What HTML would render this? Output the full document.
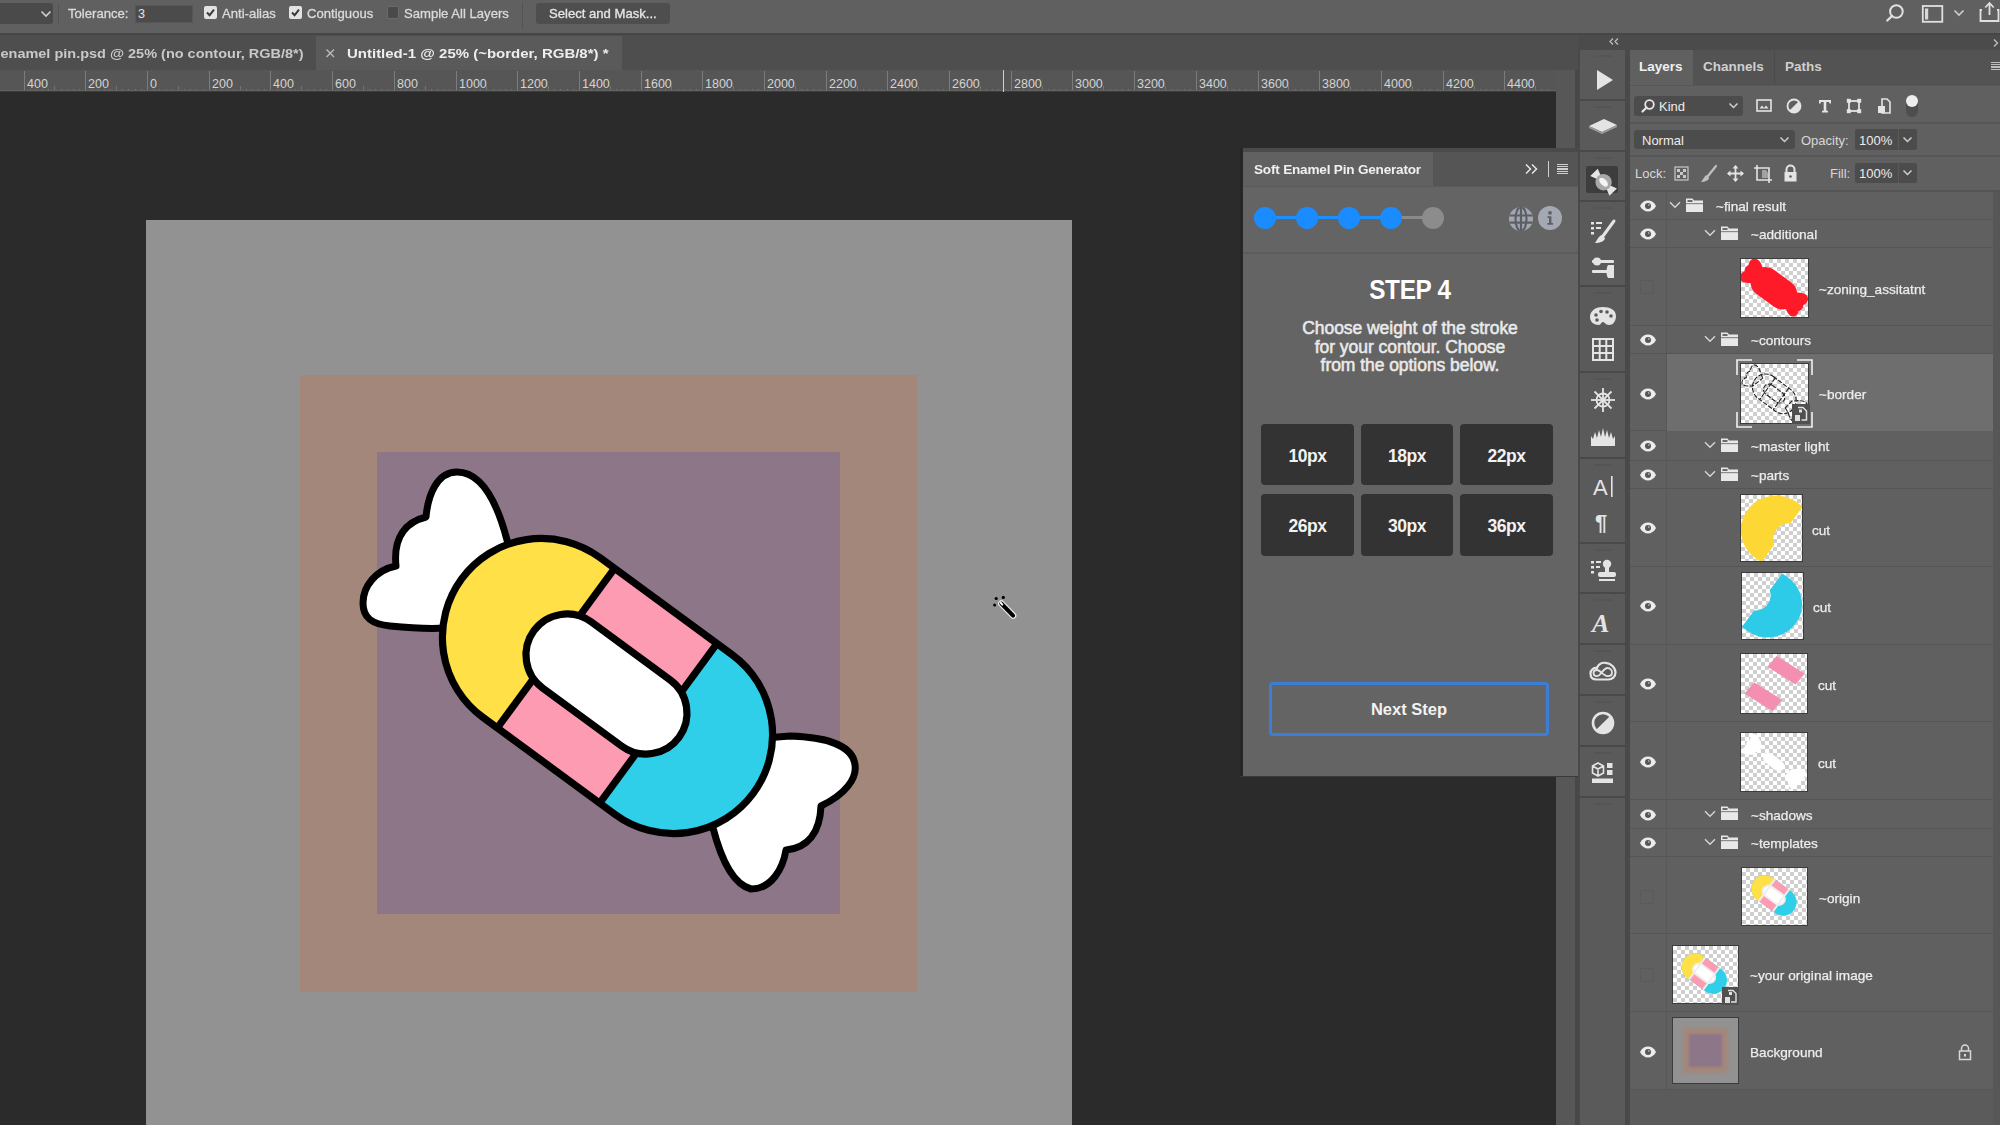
<!DOCTYPE html><html><head><meta charset="utf-8"><style>
*{margin:0;padding:0;box-sizing:border-box}
html,body{width:2000px;height:1125px;overflow:hidden;background:#2b2b2b;font-family:"Liberation Sans",sans-serif;color:#e6e6e6}
.a{position:absolute}
.t{position:absolute;white-space:nowrap;line-height:1}
</style></head><body>
<div class="a" style="left:0px;top:0px;width:2000px;height:33px;background:#606060;"></div>
<div class="a" style="left:0px;top:33px;width:2000px;height:37px;background:#4e4e4e;"></div>
<div class="a" style="left:0px;top:70px;width:1556px;height:22px;background:#565656;"></div>
<div class="a" style="left:146px;top:220px;width:926px;height:905px;background:#929292;"></div>
<div class="a" style="left:1556px;top:70px;width:20px;height:1055px;background:#575757;"></div>
<div class="a" style="left:1575px;top:70px;width:5px;height:1055px;background:#474747;"></div>
<div class="a" style="left:0px;top:3px;width:53px;height:21px;background:#4a4a4a;border-radius:0 3px 3px 0;"></div>
<svg class="a" style="left:40px;top:10px" width="12" height="8"><path d="M1.5 1.5 L6 6 L10.5 1.5" stroke="#cfcfcf" stroke-width="1.6" fill="none"/></svg>
<div class="a" style="left:58px;top:4px;width:1px;height:21px;background:#545454;"></div>
<div class="t" style="left:68px;top:8px;font-size:12.6px;color:#dadada;font-weight:normal;transform:scaleX(1.04);transform-origin:left;-webkit-text-stroke:0.3px currentColor">Tolerance:</div>
<div class="a" style="left:135px;top:5px;width:58px;height:18px;background:#4b4b4b;border:1px solid #565656;"></div>
<div class="t" style="left:138px;top:8px;font-size:12.6px;color:#e6e6e6;font-weight:normal;">3</div>
<div class="a" style="left:204px;top:6px;width:13px;height:13px;background:#e3e3e3;border-radius:2px;"></div>
<svg class="a" style="left:204px;top:6px" width="13" height="13"><path d="M3 6.5 L5.6 9.2 L10 3.6" stroke="#3a3a3a" stroke-width="2" fill="none"/></svg>
<div class="t" style="left:222px;top:8px;font-size:12.6px;color:#dadada;font-weight:normal;transform:scaleX(1.04);transform-origin:left;-webkit-text-stroke:0.3px currentColor">Anti-alias</div>
<div class="a" style="left:289px;top:6px;width:13px;height:13px;background:#e3e3e3;border-radius:2px;"></div>
<svg class="a" style="left:289px;top:6px" width="13" height="13"><path d="M3 6.5 L5.6 9.2 L10 3.6" stroke="#3a3a3a" stroke-width="2" fill="none"/></svg>
<div class="t" style="left:307px;top:8px;font-size:12.6px;color:#dadada;font-weight:normal;transform:scaleX(1.04);transform-origin:left;-webkit-text-stroke:0.3px currentColor">Contiguous</div>
<div class="a" style="left:387px;top:6px;width:12px;height:13px;background:#4a4a4a;border:1px solid #6a6a6a;border-radius:2px;"></div>
<div class="t" style="left:404px;top:8px;font-size:12.6px;color:#dadada;font-weight:normal;transform:scaleX(1.04);transform-origin:left;-webkit-text-stroke:0.3px currentColor">Sample All Layers</div>
<div class="a" style="left:522px;top:2px;width:1px;height:27px;background:#545454;"></div>
<div class="a" style="left:536px;top:3px;width:134px;height:21px;background:#4e4e4e;border-radius:3px;"></div>
<div class="t" style="left:549px;top:8px;font-size:12.6px;color:#e6e6e6;font-weight:normal;transform:scaleX(1.04);transform-origin:left;-webkit-text-stroke:0.3px currentColor">Select and Mask...</div>
<svg class="a" style="left:1880px;top:2px" width="30" height="24"><circle cx="16.4" cy="9.5" r="6.3" stroke="#e0e0e0" stroke-width="2" fill="none"/><path d="M12 14 L7.3 18.5" stroke="#e0e0e0" stroke-width="2.4" stroke-linecap="round"/></svg>
<svg class="a" style="left:1920px;top:3px" width="26" height="22"><rect x="2.8" y="3" width="19.5" height="15.8" stroke="#e0e0e0" stroke-width="1.8" fill="none"/><rect x="5" y="5.5" width="3.2" height="11" fill="#d8d8d8"/></svg>
<svg class="a" style="left:1953px;top:9px" width="12" height="9"><path d="M1.5 1.5 L6 6 L10.5 1.5" stroke="#cfcfcf" stroke-width="1.6" fill="none"/></svg>
<svg class="a" style="left:1976px;top:0px" width="24" height="24"><path d="M6 10 L4.5 10 L4.5 21 L22.5 21 L22.5 10 L21 10" stroke="#e0e0e0" stroke-width="1.8" fill="none"/><path d="M13.5 15 L13.5 3.5 M9.3 7.5 L13.5 3 L17.7 7.5" stroke="#e0e0e0" stroke-width="1.8" fill="none"/></svg>
<div class="a" style="left:0px;top:33px;width:2000px;height:2px;background:#464646;"></div>
<div class="a" style="left:316px;top:36px;width:306px;height:34px;background:#5a5a5a;"></div>
<div class="t" style="right:1697px;top:48px;font-size:12.6px;font-weight:bold;color:#c9c9c9;transform:scaleX(1.15);transform-origin:right">enamel pin.psd @ 25% (no contour, RGB/8*)</div>
<svg class="a" style="left:325px;top:48px" width="11" height="11"><path d="M1.5 1.5 L9 9 M9 1.5 L1.5 9" stroke="#bdbdbd" stroke-width="1.3"/></svg>
<div class="t" style="left:347px;top:48px;font-size:12.6px;color:#eeeeee;font-weight:bold;transform:scaleX(1.19);transform-origin:left">Untitled-1 @ 25% (~border, RGB/8*) *</div>
<div class="a" style="left:300px;top:375px;width:617px;height:617px;background:#a3877a;"></div>
<div class="a" style="left:377px;top:452px;width:463px;height:462px;background:#8e7689;"></div>
<svg class="a" style="left:0;top:0" width="1556" height="1125" viewBox="0 0 1556 1125">
<g stroke="#000" stroke-width="7" stroke-linejoin="round">
<path d="M 520,570 L 507,540 C 497,502 482,472 457,472 C 437,472 428,495 426,517 C 406,522 393,537 396,566 C 376,570 363,586 363,603 C 363,618 372,624 390,626 C 410,628 430,629 446,628 Z" fill="#fff"/>
<path d="M 690,790 L 713,828 C 720,855 732,884 751,889 C 772,889 783,868 786,850 C 808,848 820,832 821,806 C 846,794 857,778 855,765 C 853,745 825,737 790,736 L 740,740 Z" fill="#fff"/>
</g>
<g transform="translate(607.5 686) rotate(36.3)">
 <rect x="-181" y="-99" width="362" height="198" rx="99" fill="#30cfe9"/>
 <path d="M -64,-99 L -82,-99 A 99 99 0 0 0 -82,99 L -64,99 Z" fill="#ffe047"/>
 <rect x="-64" y="-99" width="127" height="198" fill="#fd9bb3"/>
 <g stroke="#000" stroke-width="7.2" fill="none">
  <rect x="-181" y="-99" width="362" height="198" rx="99"/>
  <line x1="-64" y1="-99" x2="-64" y2="99"/>
  <line x1="63" y1="-99" x2="63" y2="99"/>
 </g>
 <rect x="-92" y="-42" width="180" height="82" rx="41" fill="#fff" stroke="#000" stroke-width="7.2"/>
</g>
</svg>
<div class="a" style="left:1240px;top:148px;width:3px;height:629px;background:#262626;"></div>
<div class="a" style="left:1243px;top:148px;width:335px;height:4px;background:#4a4a4a;"></div>
<div class="a" style="left:1243px;top:152px;width:335px;height:624px;background:#646464;"></div>
<div class="a" style="left:1243px;top:152px;width:190px;height:34px;background:#616161;"></div>
<div class="a" style="left:1433px;top:152px;width:145px;height:34px;background:#555555;"></div>
<div class="a" style="left:1240px;top:776px;width:338px;height:1px;background:#3a3a3a;"></div>
<div class="a" style="left:1243px;top:186px;width:335px;height:1px;background:#5a5a5a;"></div>
<div class="t" style="left:1254px;top:163px;font-size:13.2px;color:#f0f0f0;font-weight:bold;letter-spacing:-0.2px;transform:scaleX(1.03);transform-origin:left">Soft Enamel Pin Generator</div>
<svg class="a" style="left:1524px;top:162px" width="16" height="14"><path d="M2 2.5 L6.5 7 L2 11.5 M8 2.5 L12.5 7 L8 11.5" stroke="#e6e6e6" stroke-width="1.5" fill="none"/></svg>
<div class="a" style="left:1548px;top:161px;width:1px;height:16px;background:#d0d0d0;"></div>
<div class="a" style="left:1557px;top:164.0px;width:11px;height:1.2px;background:#cfcfcf;"></div>
<div class="a" style="left:1557px;top:166.2px;width:11px;height:1.2px;background:#cfcfcf;"></div>
<div class="a" style="left:1557px;top:168.4px;width:11px;height:1.2px;background:#cfcfcf;"></div>
<div class="a" style="left:1557px;top:170.6px;width:11px;height:1.2px;background:#cfcfcf;"></div>
<div class="a" style="left:1557px;top:172.8px;width:11px;height:1.2px;background:#cfcfcf;"></div>
<div class="a" style="left:1265px;top:216px;width:126px;height:3px;background:#1e8fff;"></div>
<div class="a" style="left:1391px;top:216px;width:42px;height:3px;background:#8a8a8a;"></div>
<div class="a" style="left:1254px;top:206.5px;width:22px;height:22px;border-radius:50%;background:#1a8cff"></div>
<div class="a" style="left:1296px;top:206.5px;width:22px;height:22px;border-radius:50%;background:#1a8cff"></div>
<div class="a" style="left:1337.5px;top:206.5px;width:22px;height:22px;border-radius:50%;background:#1a8cff"></div>
<div class="a" style="left:1379.5px;top:206.5px;width:22px;height:22px;border-radius:50%;background:#1a8cff"></div>
<div class="a" style="left:1422px;top:206.5px;width:22px;height:22px;border-radius:50%;background:#8c8c8c"></div>
<svg class="a" style="left:1507.6px;top:205.6px" width="26" height="26"><defs><clipPath id="gc"><circle cx="13" cy="13" r="12"/></clipPath></defs><circle cx="13" cy="13" r="12" fill="#a2a6af"/><g fill="none" stroke="#5d5f66" stroke-width="2.2" clip-path="url(#gc)"><ellipse cx="13" cy="13" rx="5.5" ry="12.2"/><line x1="13" y1="0" x2="13" y2="26"/><line x1="0" y1="9.5" x2="26" y2="9.5"/><line x1="0" y1="16.6" x2="26" y2="16.6"/></g></svg>
<div class="a" style="left:1537.5px;top:205.5px;width:24px;height:24px;border-radius:50%;background:#a4a8b2"></div>
<svg class="a" style="left:1537.5px;top:205.5px" width="24" height="24"><circle cx="12" cy="6.8" r="1.9" fill="#5e6066"/><path d="M9.5 10.2 L13.4 10.2 L13.4 17 L15 17 L15 18.8 L9.3 18.8 L9.3 17 L11 17 L11 12 L9.5 12 Z" fill="#5e6066"/></svg>
<div class="a" style="left:1243px;top:252px;width:335px;height:2px;background:#5c5c5c;"></div>
<div class="t" style="left:1410px;top:277px;font-size:27px;color:#ffffff;font-weight:bold;transform:translateX(-50%) scaleX(0.9);letter-spacing:-0.3px">STEP 4</div>
<div class="a" style="left:1260px;top:319px;width:300px;text-align:center;font-size:17.5px;line-height:18.6px;color:#eaeaea;font-weight:normal;-webkit-text-stroke:0.55px #eaeaea;letter-spacing:-0.05px">Choose weight of the stroke<br>for your contour. Choose<br>from the options below.</div>
<div class="a" style="left:1261px;top:424px;width:93px;height:61px;background:#333333;border-radius:4px;font-size:17.5px;font-weight:bold;color:#f2f2f2;text-align:center;line-height:64px;letter-spacing:-0.5px">10px</div>
<div class="a" style="left:1361px;top:424px;width:92px;height:61px;background:#333333;border-radius:4px;font-size:17.5px;font-weight:bold;color:#f2f2f2;text-align:center;line-height:64px;letter-spacing:-0.5px">18px</div>
<div class="a" style="left:1460px;top:424px;width:93px;height:61px;background:#333333;border-radius:4px;font-size:17.5px;font-weight:bold;color:#f2f2f2;text-align:center;line-height:64px;letter-spacing:-0.5px">22px</div>
<div class="a" style="left:1261px;top:494px;width:93px;height:62px;background:#333333;border-radius:4px;font-size:17.5px;font-weight:bold;color:#f2f2f2;text-align:center;line-height:65px;letter-spacing:-0.5px">26px</div>
<div class="a" style="left:1361px;top:494px;width:92px;height:62px;background:#333333;border-radius:4px;font-size:17.5px;font-weight:bold;color:#f2f2f2;text-align:center;line-height:65px;letter-spacing:-0.5px">30px</div>
<div class="a" style="left:1460px;top:494px;width:93px;height:62px;background:#333333;border-radius:4px;font-size:17.5px;font-weight:bold;color:#f2f2f2;text-align:center;line-height:65px;letter-spacing:-0.5px">36px</div>
<div class="a" style="left:1269px;top:682px;width:280px;height:54px;border:3px solid #3b7ed8;border-radius:4px;font-size:16.5px;font-weight:bold;color:#f2f2f2;text-align:center;line-height:48px">Next Step</div>
<div class="a" style="left:1578px;top:35px;width:422px;height:15px;background:#4b4b4b;"></div>
<svg class="a" style="left:1607px;top:37px" width="14" height="10"><path d="M6 1.5 L3 4.5 L6 7.5 M11 1.5 L8 4.5 L11 7.5" stroke="#bdbdbd" stroke-width="1.3" fill="none"/></svg>
<svg class="a" style="left:1992px;top:38px" width="8" height="10"><path d="M2 1.5 L5.5 5 L2 8.5" stroke="#bdbdbd" stroke-width="1.4" fill="none"/></svg>
<div class="a" style="left:1578px;top:50px;width:50px;height:1075px;background:#494949;"></div>
<div class="a" style="left:1580px;top:50px;width:45px;height:49px;background:#5a5a5a;"></div>
<div class="a" style="left:1594px;top:55px;width:18px;height:2px;background:#555555;"></div>
<div class="a" style="left:1580px;top:101px;width:45px;height:49px;background:#5a5a5a;"></div>
<div class="a" style="left:1594px;top:106px;width:18px;height:2px;background:#555555;"></div>
<div class="a" style="left:1580px;top:152px;width:45px;height:48px;background:#5a5a5a;"></div>
<div class="a" style="left:1594px;top:157px;width:18px;height:2px;background:#555555;"></div>
<div class="a" style="left:1580px;top:202px;width:45px;height:83px;background:#5a5a5a;"></div>
<div class="a" style="left:1594px;top:207px;width:18px;height:2px;background:#555555;"></div>
<div class="a" style="left:1580px;top:287px;width:45px;height:84px;background:#5a5a5a;"></div>
<div class="a" style="left:1594px;top:292px;width:18px;height:2px;background:#555555;"></div>
<div class="a" style="left:1580px;top:373px;width:45px;height:84px;background:#5a5a5a;"></div>
<div class="a" style="left:1594px;top:378px;width:18px;height:2px;background:#555555;"></div>
<div class="a" style="left:1580px;top:459px;width:45px;height:83px;background:#5a5a5a;"></div>
<div class="a" style="left:1594px;top:464px;width:18px;height:2px;background:#555555;"></div>
<div class="a" style="left:1580px;top:544px;width:45px;height:48px;background:#5a5a5a;"></div>
<div class="a" style="left:1594px;top:549px;width:18px;height:2px;background:#555555;"></div>
<div class="a" style="left:1580px;top:594px;width:45px;height:49px;background:#5a5a5a;"></div>
<div class="a" style="left:1594px;top:599px;width:18px;height:2px;background:#555555;"></div>
<div class="a" style="left:1580px;top:645px;width:45px;height:49px;background:#5a5a5a;"></div>
<div class="a" style="left:1594px;top:650px;width:18px;height:2px;background:#555555;"></div>
<div class="a" style="left:1580px;top:696px;width:45px;height:49px;background:#5a5a5a;"></div>
<div class="a" style="left:1594px;top:701px;width:18px;height:2px;background:#555555;"></div>
<div class="a" style="left:1580px;top:747px;width:45px;height:49px;background:#5a5a5a;"></div>
<div class="a" style="left:1594px;top:752px;width:18px;height:2px;background:#555555;"></div>
<div class="a" style="left:1580px;top:798px;width:45px;height:327px;background:#5a5a5a;"></div>
<div class="a" style="left:1594px;top:803px;width:18px;height:2px;background:#555555;"></div>
<svg class="a" style="left:1589.0px;top:65.0px" width="30" height="30" viewBox="0 0 30 30"><path d="M8 5 L24 15 L8 25 Z" fill="#e4e4e4"/></svg>
<svg class="a" style="left:1587.0px;top:112.0px" width="32" height="28" viewBox="0 0 32 28"><path d="M2 14 L17 7 L30 13 L15 20 Z" fill="#e4e4e4"/><path d="M2 14 L15 20 L30 13 L30 15 L15 22 L2 16 Z" fill="#9a9a9a"/></svg>
<div class="a" style="left:1586px;top:166px;width:32px;height:27px;background:#3d3d3d;border-radius:2px;"></div>
<svg class="a" style="left:1586px;top:166px;overflow:visible" width="32" height="27"><g transform="translate(17.6 16.2) rotate(46)"><path d="M-7 -2.6 L-13.8 -5.2 L-13.8 5.2 L-7 2.6 Z" fill="#e4e4e4"/><path d="M7 -2.6 L13.8 -5.2 L13.8 5.2 L7 2.6 Z" fill="#e4e4e4"/><circle r="8.2" fill="#a8a8a8"/><ellipse rx="5.4" ry="3.1" fill="#f4f4f4"/></g></svg>
<svg class="a" style="left:1588.0px;top:217.0px" width="30" height="30" viewBox="0 0 30 30"><g fill="#e4e4e4"><rect x="3" y="5" width="3" height="2.5"/><rect x="3" y="10" width="3" height="2.5"/><rect x="3" y="15" width="3" height="2.5"/><rect x="8" y="5" width="6" height="2"/><rect x="8" y="10" width="5" height="2"/></g><path d="M26 4 L15 19" stroke="#e4e4e4" stroke-width="3" stroke-linecap="round"/><path d="M14 18 C10 19 9 24 7 26 C12 26 17 24 17 21 Z" fill="#e4e4e4"/></svg>
<svg class="a" style="left:1588.0px;top:251.0px" width="30" height="30" viewBox="0 0 30 30"><g fill="#e4e4e4"><rect x="4" y="9" width="22" height="3" rx="1"/><circle cx="9" cy="10.5" r="4"/><rect x="4" y="19" width="22" height="3" rx="1"/><path d="M20 14 L26 14 L26 27 L20 27 C18 24 18 17 20 14Z"/></g></svg>
<svg class="a" style="left:1588.0px;top:301.0px" width="30" height="30" viewBox="0 0 30 30"><path d="M15 6 C6 6 2 11 2 16 C2 21 6 24 11 24 C13 24 13 21 15 21 C17 21 17 24 21 24 C26 24 28 19 28 15 C28 9 22 6 15 6 Z" fill="#e4e4e4"/><g fill="#5a5a5a"><circle cx="8" cy="14" r="1.8"/><circle cx="13" cy="10.5" r="1.8"/><circle cx="19" cy="11" r="1.8"/><circle cx="23" cy="15" r="1.8"/><circle cx="9" cy="19" r="1.8"/></g></svg>
<svg class="a" style="left:1588.0px;top:335.0px" width="30" height="30" viewBox="0 0 30 30"><g stroke="#e4e4e4" stroke-width="2" fill="none"><rect x="5" y="4" width="20" height="21"/><line x1="11.7" y1="4" x2="11.7" y2="25"/><line x1="18.3" y1="4" x2="18.3" y2="25"/><line x1="5" y1="11" x2="25" y2="11"/><line x1="5" y1="18" x2="25" y2="18"/></g></svg>
<svg class="a" style="left:1588.0px;top:385.0px" width="30" height="30" viewBox="0 0 30 30"><g stroke="#e4e4e4" stroke-width="1.8" fill="none"><circle cx="15" cy="15" r="6.5"/><line x1="15" y1="3" x2="15" y2="27"/><line x1="3" y1="15" x2="27" y2="15"/><line x1="6.5" y1="6.5" x2="23.5" y2="23.5"/><line x1="23.5" y1="6.5" x2="6.5" y2="23.5"/></g></svg>
<svg class="a" style="left:1588.0px;top:422.0px" width="30" height="30" viewBox="0 0 30 30"><path d="M3 24 L3 14 L5 17 L7 10 L9 16 L11 8 L13 15 L15 6 L17 15 L19 8 L21 16 L23 10 L25 17 L27 14 L27 24 Z" fill="#e4e4e4"/></svg>
<svg class="a" style="left:1589.0px;top:471.0px" width="30" height="30" viewBox="0 0 30 30"><text x="4" y="24" font-family="Liberation Sans" font-size="22" fill="#e4e4e4">A</text><rect x="22" y="5" width="1.6" height="21" fill="#e4e4e4"/></svg>
<svg class="a" style="left:1588.0px;top:505.0px" width="30" height="30" viewBox="0 0 30 30"><text x="7" y="25" font-family="Liberation Sans" font-weight="bold" font-size="22" fill="#e4e4e4">¶</text></svg>
<svg class="a" style="left:1588.0px;top:556.0px" width="30" height="30" viewBox="0 0 30 30"><g fill="#e4e4e4"><rect x="3" y="5" width="3" height="2.5"/><rect x="3" y="10" width="3" height="2.5"/><rect x="3" y="15" width="3" height="2.5"/><rect x="8" y="5" width="5" height="2"/><rect x="8" y="10" width="4" height="2"/><circle cx="19" cy="8" r="4.2"/><rect x="17" y="11" width="4" height="6"/><rect x="10" y="16" width="18" height="5" rx="2"/><rect x="11" y="23" width="16" height="2"/></g></svg>
<svg class="a" style="left:1588.0px;top:607.0px" width="30" height="30" viewBox="0 0 30 30"><text x="4" y="25" font-family="Liberation Serif" font-style="italic" font-weight="bold" font-size="26" fill="#e4e4e4">A</text></svg>
<svg class="a" style="left:1588.0px;top:658.0px" width="30" height="30" viewBox="0 0 30 30"><g stroke="#e4e4e4" stroke-width="2.2" fill="none"><path d="M8.5 21.5 C4 21.5 2.5 18.5 2.5 15.5 C2.5 11.5 6 9.5 9 10 C10.5 6 14 4.5 17.5 4.8 C23 5.2 27.5 9.5 27.5 14.5 C27.5 19 24 21.5 20.5 21.5 Z"/><path d="M9 18.2 C6.5 18.2 5.5 16.5 5.5 15 C5.5 13.2 7 12 9 12 C12.5 12 15.5 18.2 20 18.2 C22.5 18.2 24 16.5 24 14.5 C24 12 22 10 19.5 10 C15 10 13 18.2 9 18.2 Z" stroke-width="1.8"/></g></svg>
<svg class="a" style="left:1588.0px;top:708.0px" width="30" height="30" viewBox="0 0 30 30"><circle cx="15" cy="15" r="10" fill="none" stroke="#e4e4e4" stroke-width="2.6"/><path d="M22.1 7.9 A10 10 0 0 1 7.9 22.1 Z" fill="#e4e4e4"/></svg>
<svg class="a" style="left:1588.0px;top:758.0px" width="30" height="30" viewBox="0 0 30 30"><g stroke="#e4e4e4" stroke-width="1.6" fill="none"><path d="M4.5 8 L10 5 L15.5 8 L15.5 15 L10 18 L4.5 15 Z M4.5 8 L10 11 L15.5 8 M10 11 L10 18"/></g><g fill="#e4e4e4"><rect x="19" y="5" width="5.5" height="5"/><rect x="19" y="12" width="5.5" height="5"/><rect x="4" y="20.5" width="21" height="4.5"/></g></svg>
<div class="a" style="left:1628px;top:50px;width:372px;height:1075px;background:#606060;"></div>
<div class="a" style="left:1628px;top:50px;width:2px;height:1075px;background:#4a4a4a;"></div>
<div class="a" style="left:1630px;top:50px;width:370px;height:35px;background:#535353;"></div>
<div class="a" style="left:1630px;top:50px;width:63px;height:35px;background:#606060;"></div>
<div class="a" style="left:1774px;top:50px;width:1px;height:35px;background:#4b4b4b;"></div>
<div class="t" style="left:1639px;top:60px;font-size:13.5px;color:#f0f0f0;font-weight:bold;">Layers</div>
<div class="t" style="left:1703px;top:60px;font-size:13.5px;color:#cfcfcf;font-weight:bold;">Channels</div>
<div class="t" style="left:1785px;top:60px;font-size:13.5px;color:#cfcfcf;font-weight:bold;">Paths</div>
<div class="a" style="left:1991px;top:62.0px;width:9px;height:1.2px;background:#bdbdbd;"></div>
<div class="a" style="left:1991px;top:64.2px;width:9px;height:1.2px;background:#bdbdbd;"></div>
<div class="a" style="left:1991px;top:66.4px;width:9px;height:1.2px;background:#bdbdbd;"></div>
<div class="a" style="left:1991px;top:68.6px;width:9px;height:1.2px;background:#bdbdbd;"></div>
<div class="a" style="left:1630px;top:85px;width:370px;height:1px;background:#575757;"></div>
<div class="a" style="left:1634px;top:96px;width:109px;height:20px;background:#4c4c4c;border-radius:3px;"></div>
<svg class="a" style="left:1640px;top:98px" width="16" height="16"><circle cx="9.5" cy="6.5" r="4.3" stroke="#e6e6e6" stroke-width="1.8" fill="none"/><path d="M6.6 9.5 L2.5 13.5" stroke="#e6e6e6" stroke-width="2.2" stroke-linecap="round"/></svg>
<div class="t" style="left:1659px;top:100px;font-size:13px;color:#ececec;font-weight:normal;">Kind</div>
<svg class="a" style="left:1728px;top:102px" width="11" height="8"><path d="M1.5 1.5 L5.5 5.5 L9.5 1.5" stroke="#cfcfcf" stroke-width="1.5" fill="none"/></svg>
<svg class="a" style="left:1755px;top:97px" width="18" height="17"><rect x="2" y="3" width="14" height="11" stroke="#e4e4e4" stroke-width="1.6" fill="none"/><path d="M4.5 11.5 L7 8.5 L9 11 L11 8.5 L13.5 11.5 Z" fill="#e4e4e4"/></svg>
<svg class="a" style="left:1785px;top:97px" width="18" height="18"><circle cx="9" cy="9" r="6.5" stroke="#e4e4e4" stroke-width="1.8" fill="none"/><path d="M13.6 4.4 A6.5 6.5 0 0 1 4.4 13.6 Z" fill="#e4e4e4"/></svg>
<svg class="a" style="left:1816px;top:97px" width="18" height="18"><path d="M3 3 L15 3 L15 6.5 L13.5 6.5 L13 5 L10.3 5 L10.3 13.5 L12 14 L12 15.5 L6 15.5 L6 14 L7.7 13.5 L7.7 5 L5 5 L4.5 6.5 L3 6.5 Z" fill="#e4e4e4"/></svg>
<svg class="a" style="left:1845px;top:97px" width="18" height="18"><rect x="4" y="4" width="10" height="10" stroke="#e4e4e4" stroke-width="1.8" fill="none"/><g fill="#e4e4e4"><rect x="1.8" y="1.8" width="4" height="4"/><rect x="12.2" y="1.8" width="4" height="4"/><rect x="1.8" y="12.2" width="4" height="4"/><rect x="12.2" y="12.2" width="4" height="4"/></g></svg>
<svg class="a" style="left:1875px;top:97px" width="18" height="18"><path d="M7 2 L12 2 L15 5 L15 16 L7 16 Z" stroke="#e4e4e4" stroke-width="1.6" fill="none"/><rect x="3" y="9" width="7" height="7" fill="#e4e4e4"/></svg>
<div class="a" style="left:1906px;top:97px;width:12px;height:20px;border-radius:6px;background:#4e4e4e"></div>
<div class="a" style="left:1906px;top:95px;width:12px;height:12px;border-radius:50%;background:#eeeeee"></div>
<div class="a" style="left:1630px;top:122px;width:370px;height:2px;background:#565656;"></div>
<div class="a" style="left:1634px;top:130px;width:161px;height:19px;background:#4c4c4c;border-radius:3px;"></div>
<div class="t" style="left:1642px;top:134px;font-size:13px;color:#ececec;font-weight:normal;">Normal</div>
<svg class="a" style="left:1779px;top:136px" width="11" height="8"><path d="M1.5 1.5 L5.5 5.5 L9.5 1.5" stroke="#cfcfcf" stroke-width="1.5" fill="none"/></svg>
<div class="t" style="left:1801px;top:134px;font-size:13px;color:#d8d8d8;font-weight:normal;">Opacity:</div>
<div class="a" style="left:1855px;top:129px;width:62px;height:21px;background:#4c4c4c;border-radius:2px;"></div>
<div class="a" style="left:1898px;top:129px;width:1px;height:21px;background:#5a5a5a;"></div>
<div class="t" style="left:1859px;top:134px;font-size:13px;color:#ececec;font-weight:normal;">100%</div>
<svg class="a" style="left:1902px;top:136px" width="11" height="8"><path d="M1.5 1.5 L5.5 5.5 L9.5 1.5" stroke="#cfcfcf" stroke-width="1.5" fill="none"/></svg>
<div class="a" style="left:1630px;top:155px;width:370px;height:2px;background:#565656;"></div>
<div class="t" style="left:1635px;top:167px;font-size:13px;color:#d8d8d8;font-weight:normal;">Lock:</div>
<svg class="a" style="left:1674px;top:166px" width="15" height="15"><rect x="1" y="1" width="13" height="13" stroke="#c8c8c8" stroke-width="1.2" fill="none"/><g fill="#c8c8c8"><rect x="3" y="3" width="3" height="3"/><rect x="9" y="3" width="3" height="3"/><rect x="6" y="6" width="3" height="3"/><rect x="3" y="9" width="3" height="3"/><rect x="9" y="9" width="3" height="3"/></g></svg>
<svg class="a" style="left:1699px;top:164px" width="20" height="20"><path d="M17 2 L9 12" stroke="#bfbfbf" stroke-width="2.2" stroke-linecap="round"/><path d="M8 11 C5 12 4 16 2 18 C6 18 10 16 10 14 Z" fill="#bfbfbf"/></svg>
<svg class="a" style="left:1726px;top:164px" width="19" height="19"><path d="M9.5 2 L9.5 17 M2 9.5 L17 9.5" stroke="#e4e4e4" stroke-width="1.8"/><path d="M9.5 1 L12.5 4.5 L6.5 4.5 Z M9.5 18 L12.5 14.5 L6.5 14.5 Z M1 9.5 L4.5 6.5 L4.5 12.5 Z M18 9.5 L14.5 6.5 L14.5 12.5 Z" fill="#e4e4e4"/></svg>
<svg class="a" style="left:1753px;top:164px" width="20" height="20"><path d="M4 1 L4 16 L19 16 M1 4 L16 4 L16 19" stroke="#e4e4e4" stroke-width="1.6" fill="none"/><path d="M9 6 L13 6 L15 9 L15 14 L9 14" fill="#cfcfcf" opacity="0.6"/></svg>
<svg class="a" style="left:1782px;top:164px" width="17" height="19"><path d="M4.5 8 L4.5 5.5 A4 4 0 0 1 12.5 5.5 L12.5 8" stroke="#e4e4e4" stroke-width="2" fill="none"/><rect x="2.5" y="8" width="12" height="9.5" fill="#e4e4e4"/><circle cx="8.5" cy="12.5" r="1.3" fill="#606060"/></svg>
<div class="t" style="left:1830px;top:167px;font-size:13px;color:#d8d8d8;font-weight:normal;">Fill:</div>
<div class="a" style="left:1855px;top:163px;width:62px;height:20px;background:#4c4c4c;border-radius:2px;"></div>
<div class="a" style="left:1898px;top:163px;width:1px;height:20px;background:#5a5a5a;"></div>
<div class="t" style="left:1859px;top:167px;font-size:13px;color:#ececec;font-weight:normal;">100%</div>
<svg class="a" style="left:1902px;top:169px" width="11" height="8"><path d="M1.5 1.5 L5.5 5.5 L9.5 1.5" stroke="#cfcfcf" stroke-width="1.5" fill="none"/></svg>
<div class="a" style="left:1630px;top:190px;width:370px;height:2px;background:#545454;"></div>
<div class="a" style="left:1666px;top:192px;width:1px;height:897px;background:#585858;"></div>
<div class="a" style="left:1630px;top:191px;width:363px;height:1px;background:#555555;"></div>
<div class="a" style="left:1630px;top:219px;width:363px;height:1px;background:#555555;"></div>
<div class="a" style="left:1630px;top:247px;width:363px;height:1px;background:#555555;"></div>
<div class="a" style="left:1630px;top:325px;width:363px;height:1px;background:#555555;"></div>
<div class="a" style="left:1630px;top:353px;width:363px;height:1px;background:#555555;"></div>
<div class="a" style="left:1630px;top:430px;width:363px;height:1px;background:#555555;"></div>
<div class="a" style="left:1630px;top:460px;width:363px;height:1px;background:#555555;"></div>
<div class="a" style="left:1630px;top:488px;width:363px;height:1px;background:#555555;"></div>
<div class="a" style="left:1630px;top:566px;width:363px;height:1px;background:#555555;"></div>
<div class="a" style="left:1630px;top:644px;width:363px;height:1px;background:#555555;"></div>
<div class="a" style="left:1630px;top:721px;width:363px;height:1px;background:#555555;"></div>
<div class="a" style="left:1630px;top:799px;width:363px;height:1px;background:#555555;"></div>
<div class="a" style="left:1630px;top:828px;width:363px;height:1px;background:#555555;"></div>
<div class="a" style="left:1630px;top:856px;width:363px;height:1px;background:#555555;"></div>
<div class="a" style="left:1630px;top:933px;width:363px;height:1px;background:#555555;"></div>
<div class="a" style="left:1630px;top:1011px;width:363px;height:1px;background:#555555;"></div>
<div class="a" style="left:1630px;top:1089px;width:363px;height:1px;background:#555555;"></div>
<div class="a" style="left:1667px;top:354px;width:326px;height:77px;background:#6e6e6e;"></div>
<svg class="a" style="left:1639px;top:199.0px" width="18" height="14"><path d="M1 7 C4.5 -0.3 13.5 -0.3 17 7 C13.5 14.3 4.5 14.3 1 7 Z" fill="#ececec"/><circle cx="9" cy="7" r="3" fill="#575757"/><circle cx="9.8" cy="6" r="0.8" fill="#cfcfcf"/></svg>
<svg class="a" style="left:1669px;top:201.0px" width="12" height="8"><path d="M1 1.2 L6 6.2 L11 1.2" stroke="#d6d6d6" stroke-width="1.4" fill="none"/></svg>
<svg class="a" style="left:1685px;top:196.5px" width="19" height="16"><path d="M1 1.5 L7.5 1.5 L9 3.5 L18 3.5 L18 15 L1 15 Z" fill="#e8e8e8"/><rect x="2.5" y="3" width="5" height="2" fill="#6a6a6a"/><rect x="1" y="6" width="17" height="1.2" fill="#8a8a8a"/></svg>
<div class="t" style="left:1716px;top:201.0px;font-size:12.6px;color:#ececec;-webkit-text-stroke:0.25px #ececec;transform:scaleX(1.08);transform-origin:left">~final result</div>
<svg class="a" style="left:1639px;top:227.0px" width="18" height="14"><path d="M1 7 C4.5 -0.3 13.5 -0.3 17 7 C13.5 14.3 4.5 14.3 1 7 Z" fill="#ececec"/><circle cx="9" cy="7" r="3" fill="#575757"/><circle cx="9.8" cy="6" r="0.8" fill="#cfcfcf"/></svg>
<svg class="a" style="left:1704px;top:229.0px" width="12" height="8"><path d="M1 1.2 L6 6.2 L11 1.2" stroke="#d6d6d6" stroke-width="1.4" fill="none"/></svg>
<svg class="a" style="left:1720px;top:224.5px" width="19" height="16"><path d="M1 1.5 L7.5 1.5 L9 3.5 L18 3.5 L18 15 L1 15 Z" fill="#e8e8e8"/><rect x="2.5" y="3" width="5" height="2" fill="#6a6a6a"/><rect x="1" y="6" width="17" height="1.2" fill="#8a8a8a"/></svg>
<div class="t" style="left:1751px;top:229.0px;font-size:12.6px;color:#ececec;-webkit-text-stroke:0.25px #ececec;transform:scaleX(1.08);transform-origin:left">~additional</div>
<svg class="a" style="left:1639px;top:333.0px" width="18" height="14"><path d="M1 7 C4.5 -0.3 13.5 -0.3 17 7 C13.5 14.3 4.5 14.3 1 7 Z" fill="#ececec"/><circle cx="9" cy="7" r="3" fill="#575757"/><circle cx="9.8" cy="6" r="0.8" fill="#cfcfcf"/></svg>
<svg class="a" style="left:1704px;top:335.0px" width="12" height="8"><path d="M1 1.2 L6 6.2 L11 1.2" stroke="#d6d6d6" stroke-width="1.4" fill="none"/></svg>
<svg class="a" style="left:1720px;top:330.5px" width="19" height="16"><path d="M1 1.5 L7.5 1.5 L9 3.5 L18 3.5 L18 15 L1 15 Z" fill="#e8e8e8"/><rect x="2.5" y="3" width="5" height="2" fill="#6a6a6a"/><rect x="1" y="6" width="17" height="1.2" fill="#8a8a8a"/></svg>
<div class="t" style="left:1751px;top:335.0px;font-size:12.6px;color:#ececec;-webkit-text-stroke:0.25px #ececec;transform:scaleX(1.08);transform-origin:left">~contours</div>
<svg class="a" style="left:1639px;top:439.0px" width="18" height="14"><path d="M1 7 C4.5 -0.3 13.5 -0.3 17 7 C13.5 14.3 4.5 14.3 1 7 Z" fill="#ececec"/><circle cx="9" cy="7" r="3" fill="#575757"/><circle cx="9.8" cy="6" r="0.8" fill="#cfcfcf"/></svg>
<svg class="a" style="left:1704px;top:441.0px" width="12" height="8"><path d="M1 1.2 L6 6.2 L11 1.2" stroke="#d6d6d6" stroke-width="1.4" fill="none"/></svg>
<svg class="a" style="left:1720px;top:436.5px" width="19" height="16"><path d="M1 1.5 L7.5 1.5 L9 3.5 L18 3.5 L18 15 L1 15 Z" fill="#e8e8e8"/><rect x="2.5" y="3" width="5" height="2" fill="#6a6a6a"/><rect x="1" y="6" width="17" height="1.2" fill="#8a8a8a"/></svg>
<div class="t" style="left:1751px;top:441.0px;font-size:12.6px;color:#ececec;-webkit-text-stroke:0.25px #ececec;transform:scaleX(1.08);transform-origin:left">~master light</div>
<svg class="a" style="left:1639px;top:468.0px" width="18" height="14"><path d="M1 7 C4.5 -0.3 13.5 -0.3 17 7 C13.5 14.3 4.5 14.3 1 7 Z" fill="#ececec"/><circle cx="9" cy="7" r="3" fill="#575757"/><circle cx="9.8" cy="6" r="0.8" fill="#cfcfcf"/></svg>
<svg class="a" style="left:1704px;top:470.0px" width="12" height="8"><path d="M1 1.2 L6 6.2 L11 1.2" stroke="#d6d6d6" stroke-width="1.4" fill="none"/></svg>
<svg class="a" style="left:1720px;top:465.5px" width="19" height="16"><path d="M1 1.5 L7.5 1.5 L9 3.5 L18 3.5 L18 15 L1 15 Z" fill="#e8e8e8"/><rect x="2.5" y="3" width="5" height="2" fill="#6a6a6a"/><rect x="1" y="6" width="17" height="1.2" fill="#8a8a8a"/></svg>
<div class="t" style="left:1751px;top:470.0px;font-size:12.6px;color:#ececec;-webkit-text-stroke:0.25px #ececec;transform:scaleX(1.08);transform-origin:left">~parts</div>
<svg class="a" style="left:1639px;top:807.5px" width="18" height="14"><path d="M1 7 C4.5 -0.3 13.5 -0.3 17 7 C13.5 14.3 4.5 14.3 1 7 Z" fill="#ececec"/><circle cx="9" cy="7" r="3" fill="#575757"/><circle cx="9.8" cy="6" r="0.8" fill="#cfcfcf"/></svg>
<svg class="a" style="left:1704px;top:809.5px" width="12" height="8"><path d="M1 1.2 L6 6.2 L11 1.2" stroke="#d6d6d6" stroke-width="1.4" fill="none"/></svg>
<svg class="a" style="left:1720px;top:805.0px" width="19" height="16"><path d="M1 1.5 L7.5 1.5 L9 3.5 L18 3.5 L18 15 L1 15 Z" fill="#e8e8e8"/><rect x="2.5" y="3" width="5" height="2" fill="#6a6a6a"/><rect x="1" y="6" width="17" height="1.2" fill="#8a8a8a"/></svg>
<div class="t" style="left:1751px;top:809.5px;font-size:12.6px;color:#ececec;-webkit-text-stroke:0.25px #ececec;transform:scaleX(1.08);transform-origin:left">~shadows</div>
<svg class="a" style="left:1639px;top:836.0px" width="18" height="14"><path d="M1 7 C4.5 -0.3 13.5 -0.3 17 7 C13.5 14.3 4.5 14.3 1 7 Z" fill="#ececec"/><circle cx="9" cy="7" r="3" fill="#575757"/><circle cx="9.8" cy="6" r="0.8" fill="#cfcfcf"/></svg>
<svg class="a" style="left:1704px;top:838.0px" width="12" height="8"><path d="M1 1.2 L6 6.2 L11 1.2" stroke="#d6d6d6" stroke-width="1.4" fill="none"/></svg>
<svg class="a" style="left:1720px;top:833.5px" width="19" height="16"><path d="M1 1.5 L7.5 1.5 L9 3.5 L18 3.5 L18 15 L1 15 Z" fill="#e8e8e8"/><rect x="2.5" y="3" width="5" height="2" fill="#6a6a6a"/><rect x="1" y="6" width="17" height="1.2" fill="#8a8a8a"/></svg>
<div class="t" style="left:1751px;top:838.0px;font-size:12.6px;color:#ececec;-webkit-text-stroke:0.25px #ececec;transform:scaleX(1.08);transform-origin:left">~templates</div>
<div class="a" style="left:1640px;top:280px;width:14px;height:14px;background:transparent;border:1px solid #5a5a5a;"></div>
<div class="a" style="left:1740px;top:258px;width:69px;height:60px;border:1px solid #3c3c3c;background-color:#ffffff;background-image:conic-gradient(#cfcfcf 25%,transparent 0 50%,#cfcfcf 0 75%,transparent 0);background-size:8px 8px;"><svg width="67" height="58" viewBox="352 458 520 452" preserveAspectRatio="none" style="display:block"><g fill="#ff1a2a" stroke="#ff1a2a" stroke-width="34" stroke-linejoin="round"><path d="M 520,570 L 507,540 C 497,502 482,472 457,472 C 437,472 428,495 426,517 C 406,522 393,537 396,566 C 376,570 363,586 363,603 C 363,618 372,624 390,626 C 410,628 430,629 446,628 Z"/><path d="M 690,790 L 713,828 C 720,855 732,884 751,889 C 772,889 783,868 786,850 C 808,848 820,832 821,806 C 846,794 857,778 855,765 C 853,745 825,737 790,736 L 740,740 Z"/><rect transform="translate(607.5 686) rotate(36.3)" x="-181" y="-99" width="362" height="198" rx="99"/></g></svg></div>
<div class="t" style="left:1819px;top:284px;font-size:12.6px;color:#ececec;-webkit-text-stroke:0.25px #ececec;transform:scaleX(1.08);transform-origin:left">~zoning_assitatnt</div>
<svg class="a" style="left:1639px;top:387px" width="18" height="14"><path d="M1 7 C4.5 -0.3 13.5 -0.3 17 7 C13.5 14.3 4.5 14.3 1 7 Z" fill="#ececec"/><circle cx="9" cy="7" r="3" fill="#575757"/><circle cx="9.8" cy="6" r="0.8" fill="#cfcfcf"/></svg>
<div class="a" style="left:1740px;top:363px;width:69px;height:61px;border:1px solid #3c3c3c;background-color:#ffffff;background-image:conic-gradient(#cfcfcf 25%,transparent 0 50%,#cfcfcf 0 75%,transparent 0);background-size:8px 8px;"><svg width="67" height="59" viewBox="356 465 506 437" preserveAspectRatio="none" style="display:block"><g fill="none" stroke="#1e1e1e" stroke-width="8" stroke-dasharray="34 12"><path d="M 520,570 L 507,540 C 497,502 482,472 457,472 C 437,472 428,495 426,517 C 406,522 393,537 396,566 C 376,570 363,586 363,603 C 363,618 372,624 390,626 C 410,628 430,629 446,628 Z"/><path d="M 690,790 L 713,828 C 720,855 732,884 751,889 C 772,889 783,868 786,850 C 808,848 820,832 821,806 C 846,794 857,778 855,765 C 853,745 825,737 790,736 L 740,740 Z"/><g transform="translate(607.5 686) rotate(36.3)"><rect x="-181" y="-99" width="362" height="198" rx="99"/><line x1="-64" y1="-99" x2="-64" y2="99"/><line x1="63" y1="-99" x2="63" y2="99"/><rect x="-92" y="-42" width="180" height="82" rx="41"/></g></g></svg></div>
<svg class="a" style="left:1736px;top:359px" width="77" height="69"><g stroke="#f0f0f0" stroke-width="1.6" fill="none"><path d="M1 16 L1 1 L16 1 M61 1 L76 1 L76 16 M76 53 L76 68 L61 68 M16 68 L1 68 L1 53"/></g></svg>
<div class="a" style="left:1792px;top:404px;width:18px;height:20px;background:#505050;"></div>
<svg class="a" style="left:1794px;top:406px" width="14" height="16"><rect x="1" y="9" width="5" height="6" fill="#e0e0e0"/><path d="M4 1.5 L9 1.5 L12.5 5 L12.5 14 L7.5 14" stroke="#e0e0e0" stroke-width="1.5" fill="none"/><rect x="5" y="3.5" width="3" height="3" fill="#e0e0e0"/></svg>
<div class="t" style="left:1819px;top:389px;font-size:12.6px;color:#ececec;-webkit-text-stroke:0.25px #ececec;transform:scaleX(1.08);transform-origin:left">~border</div>
<svg class="a" style="left:1639px;top:521px" width="18" height="14"><path d="M1 7 C4.5 -0.3 13.5 -0.3 17 7 C13.5 14.3 4.5 14.3 1 7 Z" fill="#ececec"/><circle cx="9" cy="7" r="3" fill="#575757"/><circle cx="9.8" cy="6" r="0.8" fill="#cfcfcf"/></svg>
<div class="a" style="left:1740px;top:494px;width:63px;height:68px;border:1px solid #3c3c3c;background-color:#ffffff;background-image:conic-gradient(#cfcfcf 25%,transparent 0 50%,#cfcfcf 0 75%,transparent 0);background-size:8px 8px;"><svg width="61" height="66" viewBox="439 533 178 196" preserveAspectRatio="none" style="display:block"><path transform="translate(607.5 686) rotate(36.3)" d="M -64,-99 L -82,-99 A 99 99 0 0 0 -82,99 L -64,99 L -64,40 A 50 50 0 0 1 -64,-42 Z" fill="#fdd835" stroke="#fdd835" stroke-width="7"/></svg></div>
<div class="t" style="left:1812px;top:525px;font-size:12.6px;color:#ececec;-webkit-text-stroke:0.25px #ececec;transform:scaleX(1.08);transform-origin:left">cut</div>
<svg class="a" style="left:1639px;top:599px" width="18" height="14"><path d="M1 7 C4.5 -0.3 13.5 -0.3 17 7 C13.5 14.3 4.5 14.3 1 7 Z" fill="#ececec"/><circle cx="9" cy="7" r="3" fill="#575757"/><circle cx="9.8" cy="6" r="0.8" fill="#cfcfcf"/></svg>
<div class="a" style="left:1741px;top:572px;width:63px;height:68px;border:1px solid #3c3c3c;background-color:#ffffff;background-image:conic-gradient(#cfcfcf 25%,transparent 0 50%,#cfcfcf 0 75%,transparent 0);background-size:8px 8px;"><svg width="61" height="66" viewBox="596 638 183 204" preserveAspectRatio="none" style="display:block"><path transform="translate(607.5 686) rotate(216.3)" d="M -64,-99 L -82,-99 A 99 99 0 0 0 -82,99 L -64,99 L -64,40 A 50 50 0 0 1 -64,-42 Z" fill="#2ecbe8" stroke="#2ecbe8" stroke-width="7"/></svg></div>
<div class="t" style="left:1813px;top:602px;font-size:12.6px;color:#ececec;-webkit-text-stroke:0.25px #ececec;transform:scaleX(1.08);transform-origin:left">cut</div>
<svg class="a" style="left:1639px;top:677px" width="18" height="14"><path d="M1 7 C4.5 -0.3 13.5 -0.3 17 7 C13.5 14.3 4.5 14.3 1 7 Z" fill="#ececec"/><circle cx="9" cy="7" r="3" fill="#575757"/><circle cx="9.8" cy="6" r="0.8" fill="#cfcfcf"/></svg>
<div class="a" style="left:1740px;top:653px;width:68px;height:61px;border:1px solid #3c3c3c;background-color:#ffffff;background-image:conic-gradient(#cfcfcf 25%,transparent 0 50%,#cfcfcf 0 75%,transparent 0);background-size:8px 8px;"><svg width="66" height="59" viewBox="485 560 240 251" preserveAspectRatio="none" style="display:block"><g transform="translate(607.5 686) rotate(36.3)" fill="#f48fb1"><rect x="-64" y="-99" width="127" height="57"/><rect x="-64" y="40" width="127" height="59"/></g></svg></div>
<div class="t" style="left:1818px;top:680px;font-size:12.6px;color:#ececec;-webkit-text-stroke:0.25px #ececec;transform:scaleX(1.08);transform-origin:left">cut</div>
<svg class="a" style="left:1639px;top:755px" width="18" height="14"><path d="M1 7 C4.5 -0.3 13.5 -0.3 17 7 C13.5 14.3 4.5 14.3 1 7 Z" fill="#ececec"/><circle cx="9" cy="7" r="3" fill="#575757"/><circle cx="9.8" cy="6" r="0.8" fill="#cfcfcf"/></svg>
<div class="a" style="left:1740px;top:732px;width:68px;height:60px;border:1px solid #3c3c3c;background-color:#ffffff;background-image:conic-gradient(#cfcfcf 25%,transparent 0 50%,#cfcfcf 0 75%,transparent 0);background-size:8px 8px;"><svg width="66" height="58" viewBox="356 465 506 437" preserveAspectRatio="none" style="display:block"><g fill="#fff"><path d="M 520,570 L 507,540 C 497,502 482,472 457,472 C 437,472 428,495 426,517 C 406,522 393,537 396,566 C 376,570 363,586 363,603 C 363,618 372,624 390,626 C 410,628 430,629 446,628 Z"/><path d="M 690,790 L 713,828 C 720,855 732,884 751,889 C 772,889 783,868 786,850 C 808,848 820,832 821,806 C 846,794 857,778 855,765 C 853,745 825,737 790,736 L 740,740 Z"/><rect transform="translate(607.5 686) rotate(36.3)" x="-92" y="-42" width="180" height="82" rx="41"/></g></svg></div>
<div class="t" style="left:1818px;top:758px;font-size:12.6px;color:#ececec;-webkit-text-stroke:0.25px #ececec;transform:scaleX(1.08);transform-origin:left">cut</div>
<div class="a" style="left:1640px;top:890px;width:14px;height:14px;background:transparent;border:1px solid #5a5a5a;"></div>
<div class="a" style="left:1741px;top:867px;width:67px;height:59px;border:1px solid #3c3c3c;background-color:#ffffff;background-image:conic-gradient(#cfcfcf 25%,transparent 0 50%,#cfcfcf 0 75%,transparent 0);background-size:8px 8px;"><svg width="65" height="57" viewBox="375 486 473 415" preserveAspectRatio="none" style="display:block"><g transform="translate(607.5 686) rotate(36.3)"><rect x="-181" y="-99" width="362" height="198" rx="99" fill="#30cfe9"/><path d="M -64,-99 L -82,-99 A 99 99 0 0 0 -82,99 L -64,99 Z" fill="#ffe047"/><rect x="-64" y="-99" width="127" height="198" fill="#fd9bb3"/><rect x="-92" y="-42" width="180" height="82" rx="41" fill="#fff"/><g stroke="#eeeeee" stroke-width="14" fill="none"><line x1="-64" y1="-99" x2="-64" y2="99"/><line x1="63" y1="-99" x2="63" y2="99"/><rect x="-92" y="-42" width="180" height="82" rx="41"/></g></g></svg></div>
<div class="t" style="left:1819px;top:893px;font-size:12.6px;color:#ececec;-webkit-text-stroke:0.25px #ececec;transform:scaleX(1.08);transform-origin:left">~origin</div>
<div class="a" style="left:1640px;top:968px;width:14px;height:14px;background:transparent;border:1px solid #5a5a5a;"></div>
<div class="a" style="left:1672px;top:945px;width:67px;height:59px;border:1px solid #3c3c3c;background-color:#ffffff;background-image:conic-gradient(#cfcfcf 25%,transparent 0 50%,#cfcfcf 0 75%,transparent 0);background-size:8px 8px;"><svg width="65" height="57" viewBox="380 485 473 415" preserveAspectRatio="none" style="display:block"><g transform="translate(607.5 686) rotate(36.3)"><rect x="-181" y="-99" width="362" height="198" rx="99" fill="#30cfe9"/><path d="M -64,-99 L -82,-99 A 99 99 0 0 0 -82,99 L -64,99 Z" fill="#ffe047"/><rect x="-64" y="-99" width="127" height="198" fill="#fd9bb3"/><rect x="-92" y="-42" width="180" height="82" rx="41" fill="#fff"/><g stroke="#eeeeee" stroke-width="14" fill="none"><line x1="-64" y1="-99" x2="-64" y2="99"/><line x1="63" y1="-99" x2="63" y2="99"/><rect x="-92" y="-42" width="180" height="82" rx="41"/></g></g></svg></div>
<div class="a" style="left:1722px;top:987px;width:17px;height:18px;background:#505050;"></div>
<svg class="a" style="left:1724px;top:989px" width="14" height="15"><rect x="1" y="8" width="5" height="6" fill="#e0e0e0"/><path d="M4 1.5 L9 1.5 L12 4.5 L12 13 L7 13" stroke="#e0e0e0" stroke-width="1.4" fill="none"/><rect x="5" y="3" width="3" height="3" fill="#e0e0e0"/></svg>
<div class="t" style="left:1750px;top:970px;font-size:12.6px;color:#ececec;-webkit-text-stroke:0.25px #ececec;transform:scaleX(1.08);transform-origin:left">~your original image</div>
<svg class="a" style="left:1639px;top:1045px" width="18" height="14"><path d="M1 7 C4.5 -0.3 13.5 -0.3 17 7 C13.5 14.3 4.5 14.3 1 7 Z" fill="#ececec"/><circle cx="9" cy="7" r="3" fill="#575757"/><circle cx="9.8" cy="6" r="0.8" fill="#cfcfcf"/></svg>
<div class="a" style="left:1672px;top:1017px;width:67px;height:67px;border:1px solid #3c3c3c;background:#929292;overflow:hidden"><div class="a" style="left:10px;top:10px;width:45px;height:45px;background:#a3877a;filter:blur(1.6px)"></div><div class="a" style="left:16px;top:16px;width:33px;height:33px;background:#8e7689;filter:blur(1.2px)"></div></div>
<div class="t" style="left:1750px;top:1047px;font-size:12.6px;color:#ececec;-webkit-text-stroke:0.25px #ececec;transform:scaleX(1.08);transform-origin:left">Background</div>
<svg class="a" style="left:1957px;top:1043px" width="16" height="18"><path d="M4.5 8 L4.5 5.5 A3.5 3.5 0 0 1 11.5 5.5 L11.5 8" stroke="#d8d8d8" stroke-width="1.5" fill="none"/><rect x="2.5" y="8" width="11" height="8.5" stroke="#d8d8d8" stroke-width="1.5" fill="none"/><rect x="7" y="11" width="2" height="2.5" fill="#d8d8d8"/></svg>
<div class="a" style="left:1630px;top:1090px;width:363px;height:35px;background:#5b5b5b;"></div>
<div class="a" style="left:1993px;top:192px;width:7px;height:933px;background:#575757;"></div>
<div class="a" style="left:24px;top:71px;width:1px;height:21px;background:#7c7c7c;"></div>
<div class="t" style="left:27px;top:78px;font-size:12.5px;color:#d4d4d4;font-weight:normal;">400</div>
<div class="a" style="left:30px;top:89px;width:1px;height:2px;background:#747474;"></div>
<div class="a" style="left:36px;top:89px;width:1px;height:2px;background:#747474;"></div>
<div class="a" style="left:42px;top:89px;width:1px;height:2px;background:#747474;"></div>
<div class="a" style="left:48px;top:89px;width:1px;height:2px;background:#747474;"></div>
<div class="a" style="left:54px;top:86px;width:1px;height:5px;background:#747474;"></div>
<div class="a" style="left:61px;top:89px;width:1px;height:2px;background:#747474;"></div>
<div class="a" style="left:67px;top:89px;width:1px;height:2px;background:#747474;"></div>
<div class="a" style="left:73px;top:89px;width:1px;height:2px;background:#747474;"></div>
<div class="a" style="left:79px;top:89px;width:1px;height:2px;background:#747474;"></div>
<div class="a" style="left:85px;top:71px;width:1px;height:21px;background:#7c7c7c;"></div>
<div class="t" style="left:88px;top:78px;font-size:12.5px;color:#d4d4d4;font-weight:normal;">200</div>
<div class="a" style="left:91px;top:89px;width:1px;height:2px;background:#747474;"></div>
<div class="a" style="left:98px;top:89px;width:1px;height:2px;background:#747474;"></div>
<div class="a" style="left:104px;top:89px;width:1px;height:2px;background:#747474;"></div>
<div class="a" style="left:110px;top:89px;width:1px;height:2px;background:#747474;"></div>
<div class="a" style="left:116px;top:86px;width:1px;height:5px;background:#747474;"></div>
<div class="a" style="left:122px;top:89px;width:1px;height:2px;background:#747474;"></div>
<div class="a" style="left:128px;top:89px;width:1px;height:2px;background:#747474;"></div>
<div class="a" style="left:135px;top:89px;width:1px;height:2px;background:#747474;"></div>
<div class="a" style="left:141px;top:89px;width:1px;height:2px;background:#747474;"></div>
<div class="a" style="left:147px;top:71px;width:1px;height:21px;background:#7c7c7c;"></div>
<div class="t" style="left:150px;top:78px;font-size:12.5px;color:#d4d4d4;font-weight:normal;">0</div>
<div class="a" style="left:153px;top:89px;width:1px;height:2px;background:#747474;"></div>
<div class="a" style="left:159px;top:89px;width:1px;height:2px;background:#747474;"></div>
<div class="a" style="left:166px;top:89px;width:1px;height:2px;background:#747474;"></div>
<div class="a" style="left:172px;top:89px;width:1px;height:2px;background:#747474;"></div>
<div class="a" style="left:178px;top:86px;width:1px;height:5px;background:#747474;"></div>
<div class="a" style="left:184px;top:89px;width:1px;height:2px;background:#747474;"></div>
<div class="a" style="left:190px;top:89px;width:1px;height:2px;background:#747474;"></div>
<div class="a" style="left:196px;top:89px;width:1px;height:2px;background:#747474;"></div>
<div class="a" style="left:203px;top:89px;width:1px;height:2px;background:#747474;"></div>
<div class="a" style="left:209px;top:71px;width:1px;height:21px;background:#7c7c7c;"></div>
<div class="t" style="left:212px;top:78px;font-size:12.5px;color:#d4d4d4;font-weight:normal;">200</div>
<div class="a" style="left:215px;top:89px;width:1px;height:2px;background:#747474;"></div>
<div class="a" style="left:221px;top:89px;width:1px;height:2px;background:#747474;"></div>
<div class="a" style="left:227px;top:89px;width:1px;height:2px;background:#747474;"></div>
<div class="a" style="left:233px;top:89px;width:1px;height:2px;background:#747474;"></div>
<div class="a" style="left:240px;top:86px;width:1px;height:5px;background:#747474;"></div>
<div class="a" style="left:246px;top:89px;width:1px;height:2px;background:#747474;"></div>
<div class="a" style="left:252px;top:89px;width:1px;height:2px;background:#747474;"></div>
<div class="a" style="left:258px;top:89px;width:1px;height:2px;background:#747474;"></div>
<div class="a" style="left:264px;top:89px;width:1px;height:2px;background:#747474;"></div>
<div class="a" style="left:270px;top:71px;width:1px;height:21px;background:#7c7c7c;"></div>
<div class="t" style="left:273px;top:78px;font-size:12.5px;color:#d4d4d4;font-weight:normal;">400</div>
<div class="a" style="left:277px;top:89px;width:1px;height:2px;background:#747474;"></div>
<div class="a" style="left:283px;top:89px;width:1px;height:2px;background:#747474;"></div>
<div class="a" style="left:289px;top:89px;width:1px;height:2px;background:#747474;"></div>
<div class="a" style="left:295px;top:89px;width:1px;height:2px;background:#747474;"></div>
<div class="a" style="left:301px;top:86px;width:1px;height:5px;background:#747474;"></div>
<div class="a" style="left:307px;top:89px;width:1px;height:2px;background:#747474;"></div>
<div class="a" style="left:314px;top:89px;width:1px;height:2px;background:#747474;"></div>
<div class="a" style="left:320px;top:89px;width:1px;height:2px;background:#747474;"></div>
<div class="a" style="left:326px;top:89px;width:1px;height:2px;background:#747474;"></div>
<div class="a" style="left:332px;top:71px;width:1px;height:21px;background:#7c7c7c;"></div>
<div class="t" style="left:335px;top:78px;font-size:12.5px;color:#d4d4d4;font-weight:normal;">600</div>
<div class="a" style="left:338px;top:89px;width:1px;height:2px;background:#747474;"></div>
<div class="a" style="left:344px;top:89px;width:1px;height:2px;background:#747474;"></div>
<div class="a" style="left:351px;top:89px;width:1px;height:2px;background:#747474;"></div>
<div class="a" style="left:357px;top:89px;width:1px;height:2px;background:#747474;"></div>
<div class="a" style="left:363px;top:86px;width:1px;height:5px;background:#747474;"></div>
<div class="a" style="left:369px;top:89px;width:1px;height:2px;background:#747474;"></div>
<div class="a" style="left:375px;top:89px;width:1px;height:2px;background:#747474;"></div>
<div class="a" style="left:381px;top:89px;width:1px;height:2px;background:#747474;"></div>
<div class="a" style="left:388px;top:89px;width:1px;height:2px;background:#747474;"></div>
<div class="a" style="left:394px;top:71px;width:1px;height:21px;background:#7c7c7c;"></div>
<div class="t" style="left:397px;top:78px;font-size:12.5px;color:#d4d4d4;font-weight:normal;">800</div>
<div class="a" style="left:400px;top:89px;width:1px;height:2px;background:#747474;"></div>
<div class="a" style="left:406px;top:89px;width:1px;height:2px;background:#747474;"></div>
<div class="a" style="left:412px;top:89px;width:1px;height:2px;background:#747474;"></div>
<div class="a" style="left:418px;top:89px;width:1px;height:2px;background:#747474;"></div>
<div class="a" style="left:425px;top:86px;width:1px;height:5px;background:#747474;"></div>
<div class="a" style="left:431px;top:89px;width:1px;height:2px;background:#747474;"></div>
<div class="a" style="left:437px;top:89px;width:1px;height:2px;background:#747474;"></div>
<div class="a" style="left:443px;top:89px;width:1px;height:2px;background:#747474;"></div>
<div class="a" style="left:449px;top:89px;width:1px;height:2px;background:#747474;"></div>
<div class="a" style="left:456px;top:71px;width:1px;height:21px;background:#7c7c7c;"></div>
<div class="t" style="left:459px;top:78px;font-size:12.5px;color:#d4d4d4;font-weight:normal;">1000</div>
<div class="a" style="left:462px;top:89px;width:1px;height:2px;background:#747474;"></div>
<div class="a" style="left:468px;top:89px;width:1px;height:2px;background:#747474;"></div>
<div class="a" style="left:474px;top:89px;width:1px;height:2px;background:#747474;"></div>
<div class="a" style="left:480px;top:89px;width:1px;height:2px;background:#747474;"></div>
<div class="a" style="left:486px;top:86px;width:1px;height:5px;background:#747474;"></div>
<div class="a" style="left:493px;top:89px;width:1px;height:2px;background:#747474;"></div>
<div class="a" style="left:499px;top:89px;width:1px;height:2px;background:#747474;"></div>
<div class="a" style="left:505px;top:89px;width:1px;height:2px;background:#747474;"></div>
<div class="a" style="left:511px;top:89px;width:1px;height:2px;background:#747474;"></div>
<div class="a" style="left:517px;top:71px;width:1px;height:21px;background:#7c7c7c;"></div>
<div class="t" style="left:520px;top:78px;font-size:12.5px;color:#d4d4d4;font-weight:normal;">1200</div>
<div class="a" style="left:523px;top:89px;width:1px;height:2px;background:#747474;"></div>
<div class="a" style="left:530px;top:89px;width:1px;height:2px;background:#747474;"></div>
<div class="a" style="left:536px;top:89px;width:1px;height:2px;background:#747474;"></div>
<div class="a" style="left:542px;top:89px;width:1px;height:2px;background:#747474;"></div>
<div class="a" style="left:548px;top:86px;width:1px;height:5px;background:#747474;"></div>
<div class="a" style="left:554px;top:89px;width:1px;height:2px;background:#747474;"></div>
<div class="a" style="left:560px;top:89px;width:1px;height:2px;background:#747474;"></div>
<div class="a" style="left:567px;top:89px;width:1px;height:2px;background:#747474;"></div>
<div class="a" style="left:573px;top:89px;width:1px;height:2px;background:#747474;"></div>
<div class="a" style="left:579px;top:71px;width:1px;height:21px;background:#7c7c7c;"></div>
<div class="t" style="left:582px;top:78px;font-size:12.5px;color:#d4d4d4;font-weight:normal;">1400</div>
<div class="a" style="left:585px;top:89px;width:1px;height:2px;background:#747474;"></div>
<div class="a" style="left:591px;top:89px;width:1px;height:2px;background:#747474;"></div>
<div class="a" style="left:597px;top:89px;width:1px;height:2px;background:#747474;"></div>
<div class="a" style="left:604px;top:89px;width:1px;height:2px;background:#747474;"></div>
<div class="a" style="left:610px;top:86px;width:1px;height:5px;background:#747474;"></div>
<div class="a" style="left:616px;top:89px;width:1px;height:2px;background:#747474;"></div>
<div class="a" style="left:622px;top:89px;width:1px;height:2px;background:#747474;"></div>
<div class="a" style="left:628px;top:89px;width:1px;height:2px;background:#747474;"></div>
<div class="a" style="left:634px;top:89px;width:1px;height:2px;background:#747474;"></div>
<div class="a" style="left:641px;top:71px;width:1px;height:21px;background:#7c7c7c;"></div>
<div class="t" style="left:644px;top:78px;font-size:12.5px;color:#d4d4d4;font-weight:normal;">1600</div>
<div class="a" style="left:647px;top:89px;width:1px;height:2px;background:#747474;"></div>
<div class="a" style="left:653px;top:89px;width:1px;height:2px;background:#747474;"></div>
<div class="a" style="left:659px;top:89px;width:1px;height:2px;background:#747474;"></div>
<div class="a" style="left:665px;top:89px;width:1px;height:2px;background:#747474;"></div>
<div class="a" style="left:671px;top:86px;width:1px;height:5px;background:#747474;"></div>
<div class="a" style="left:678px;top:89px;width:1px;height:2px;background:#747474;"></div>
<div class="a" style="left:684px;top:89px;width:1px;height:2px;background:#747474;"></div>
<div class="a" style="left:690px;top:89px;width:1px;height:2px;background:#747474;"></div>
<div class="a" style="left:696px;top:89px;width:1px;height:2px;background:#747474;"></div>
<div class="a" style="left:702px;top:71px;width:1px;height:21px;background:#7c7c7c;"></div>
<div class="t" style="left:705px;top:78px;font-size:12.5px;color:#d4d4d4;font-weight:normal;">1800</div>
<div class="a" style="left:708px;top:89px;width:1px;height:2px;background:#747474;"></div>
<div class="a" style="left:715px;top:89px;width:1px;height:2px;background:#747474;"></div>
<div class="a" style="left:721px;top:89px;width:1px;height:2px;background:#747474;"></div>
<div class="a" style="left:727px;top:89px;width:1px;height:2px;background:#747474;"></div>
<div class="a" style="left:733px;top:86px;width:1px;height:5px;background:#747474;"></div>
<div class="a" style="left:739px;top:89px;width:1px;height:2px;background:#747474;"></div>
<div class="a" style="left:745px;top:89px;width:1px;height:2px;background:#747474;"></div>
<div class="a" style="left:752px;top:89px;width:1px;height:2px;background:#747474;"></div>
<div class="a" style="left:758px;top:89px;width:1px;height:2px;background:#747474;"></div>
<div class="a" style="left:764px;top:71px;width:1px;height:21px;background:#7c7c7c;"></div>
<div class="t" style="left:767px;top:78px;font-size:12.5px;color:#d4d4d4;font-weight:normal;">2000</div>
<div class="a" style="left:770px;top:89px;width:1px;height:2px;background:#747474;"></div>
<div class="a" style="left:776px;top:89px;width:1px;height:2px;background:#747474;"></div>
<div class="a" style="left:783px;top:89px;width:1px;height:2px;background:#747474;"></div>
<div class="a" style="left:789px;top:89px;width:1px;height:2px;background:#747474;"></div>
<div class="a" style="left:795px;top:86px;width:1px;height:5px;background:#747474;"></div>
<div class="a" style="left:801px;top:89px;width:1px;height:2px;background:#747474;"></div>
<div class="a" style="left:807px;top:89px;width:1px;height:2px;background:#747474;"></div>
<div class="a" style="left:813px;top:89px;width:1px;height:2px;background:#747474;"></div>
<div class="a" style="left:820px;top:89px;width:1px;height:2px;background:#747474;"></div>
<div class="a" style="left:826px;top:71px;width:1px;height:21px;background:#7c7c7c;"></div>
<div class="t" style="left:829px;top:78px;font-size:12.5px;color:#d4d4d4;font-weight:normal;">2200</div>
<div class="a" style="left:832px;top:89px;width:1px;height:2px;background:#747474;"></div>
<div class="a" style="left:838px;top:89px;width:1px;height:2px;background:#747474;"></div>
<div class="a" style="left:844px;top:89px;width:1px;height:2px;background:#747474;"></div>
<div class="a" style="left:850px;top:89px;width:1px;height:2px;background:#747474;"></div>
<div class="a" style="left:857px;top:86px;width:1px;height:5px;background:#747474;"></div>
<div class="a" style="left:863px;top:89px;width:1px;height:2px;background:#747474;"></div>
<div class="a" style="left:869px;top:89px;width:1px;height:2px;background:#747474;"></div>
<div class="a" style="left:875px;top:89px;width:1px;height:2px;background:#747474;"></div>
<div class="a" style="left:881px;top:89px;width:1px;height:2px;background:#747474;"></div>
<div class="a" style="left:887px;top:71px;width:1px;height:21px;background:#7c7c7c;"></div>
<div class="t" style="left:890px;top:78px;font-size:12.5px;color:#d4d4d4;font-weight:normal;">2400</div>
<div class="a" style="left:894px;top:89px;width:1px;height:2px;background:#747474;"></div>
<div class="a" style="left:900px;top:89px;width:1px;height:2px;background:#747474;"></div>
<div class="a" style="left:906px;top:89px;width:1px;height:2px;background:#747474;"></div>
<div class="a" style="left:912px;top:89px;width:1px;height:2px;background:#747474;"></div>
<div class="a" style="left:918px;top:86px;width:1px;height:5px;background:#747474;"></div>
<div class="a" style="left:924px;top:89px;width:1px;height:2px;background:#747474;"></div>
<div class="a" style="left:931px;top:89px;width:1px;height:2px;background:#747474;"></div>
<div class="a" style="left:937px;top:89px;width:1px;height:2px;background:#747474;"></div>
<div class="a" style="left:943px;top:89px;width:1px;height:2px;background:#747474;"></div>
<div class="a" style="left:949px;top:71px;width:1px;height:21px;background:#7c7c7c;"></div>
<div class="t" style="left:952px;top:78px;font-size:12.5px;color:#d4d4d4;font-weight:normal;">2600</div>
<div class="a" style="left:955px;top:89px;width:1px;height:2px;background:#747474;"></div>
<div class="a" style="left:961px;top:89px;width:1px;height:2px;background:#747474;"></div>
<div class="a" style="left:968px;top:89px;width:1px;height:2px;background:#747474;"></div>
<div class="a" style="left:974px;top:89px;width:1px;height:2px;background:#747474;"></div>
<div class="a" style="left:980px;top:86px;width:1px;height:5px;background:#747474;"></div>
<div class="a" style="left:986px;top:89px;width:1px;height:2px;background:#747474;"></div>
<div class="a" style="left:992px;top:89px;width:1px;height:2px;background:#747474;"></div>
<div class="a" style="left:998px;top:89px;width:1px;height:2px;background:#747474;"></div>
<div class="a" style="left:1005px;top:89px;width:1px;height:2px;background:#747474;"></div>
<div class="a" style="left:1011px;top:71px;width:1px;height:21px;background:#7c7c7c;"></div>
<div class="t" style="left:1014px;top:78px;font-size:12.5px;color:#d4d4d4;font-weight:normal;">2800</div>
<div class="a" style="left:1017px;top:89px;width:1px;height:2px;background:#747474;"></div>
<div class="a" style="left:1023px;top:89px;width:1px;height:2px;background:#747474;"></div>
<div class="a" style="left:1029px;top:89px;width:1px;height:2px;background:#747474;"></div>
<div class="a" style="left:1035px;top:89px;width:1px;height:2px;background:#747474;"></div>
<div class="a" style="left:1042px;top:86px;width:1px;height:5px;background:#747474;"></div>
<div class="a" style="left:1048px;top:89px;width:1px;height:2px;background:#747474;"></div>
<div class="a" style="left:1054px;top:89px;width:1px;height:2px;background:#747474;"></div>
<div class="a" style="left:1060px;top:89px;width:1px;height:2px;background:#747474;"></div>
<div class="a" style="left:1066px;top:89px;width:1px;height:2px;background:#747474;"></div>
<div class="a" style="left:1072px;top:71px;width:1px;height:21px;background:#7c7c7c;"></div>
<div class="t" style="left:1075px;top:78px;font-size:12.5px;color:#d4d4d4;font-weight:normal;">3000</div>
<div class="a" style="left:1079px;top:89px;width:1px;height:2px;background:#747474;"></div>
<div class="a" style="left:1085px;top:89px;width:1px;height:2px;background:#747474;"></div>
<div class="a" style="left:1091px;top:89px;width:1px;height:2px;background:#747474;"></div>
<div class="a" style="left:1097px;top:89px;width:1px;height:2px;background:#747474;"></div>
<div class="a" style="left:1103px;top:86px;width:1px;height:5px;background:#747474;"></div>
<div class="a" style="left:1110px;top:89px;width:1px;height:2px;background:#747474;"></div>
<div class="a" style="left:1116px;top:89px;width:1px;height:2px;background:#747474;"></div>
<div class="a" style="left:1122px;top:89px;width:1px;height:2px;background:#747474;"></div>
<div class="a" style="left:1128px;top:89px;width:1px;height:2px;background:#747474;"></div>
<div class="a" style="left:1134px;top:71px;width:1px;height:21px;background:#7c7c7c;"></div>
<div class="t" style="left:1137px;top:78px;font-size:12.5px;color:#d4d4d4;font-weight:normal;">3200</div>
<div class="a" style="left:1140px;top:89px;width:1px;height:2px;background:#747474;"></div>
<div class="a" style="left:1147px;top:89px;width:1px;height:2px;background:#747474;"></div>
<div class="a" style="left:1153px;top:89px;width:1px;height:2px;background:#747474;"></div>
<div class="a" style="left:1159px;top:89px;width:1px;height:2px;background:#747474;"></div>
<div class="a" style="left:1165px;top:86px;width:1px;height:5px;background:#747474;"></div>
<div class="a" style="left:1171px;top:89px;width:1px;height:2px;background:#747474;"></div>
<div class="a" style="left:1177px;top:89px;width:1px;height:2px;background:#747474;"></div>
<div class="a" style="left:1184px;top:89px;width:1px;height:2px;background:#747474;"></div>
<div class="a" style="left:1190px;top:89px;width:1px;height:2px;background:#747474;"></div>
<div class="a" style="left:1196px;top:71px;width:1px;height:21px;background:#7c7c7c;"></div>
<div class="t" style="left:1199px;top:78px;font-size:12.5px;color:#d4d4d4;font-weight:normal;">3400</div>
<div class="a" style="left:1202px;top:89px;width:1px;height:2px;background:#747474;"></div>
<div class="a" style="left:1208px;top:89px;width:1px;height:2px;background:#747474;"></div>
<div class="a" style="left:1214px;top:89px;width:1px;height:2px;background:#747474;"></div>
<div class="a" style="left:1221px;top:89px;width:1px;height:2px;background:#747474;"></div>
<div class="a" style="left:1227px;top:86px;width:1px;height:5px;background:#747474;"></div>
<div class="a" style="left:1233px;top:89px;width:1px;height:2px;background:#747474;"></div>
<div class="a" style="left:1239px;top:89px;width:1px;height:2px;background:#747474;"></div>
<div class="a" style="left:1245px;top:89px;width:1px;height:2px;background:#747474;"></div>
<div class="a" style="left:1251px;top:89px;width:1px;height:2px;background:#747474;"></div>
<div class="a" style="left:1258px;top:71px;width:1px;height:21px;background:#7c7c7c;"></div>
<div class="t" style="left:1261px;top:78px;font-size:12.5px;color:#d4d4d4;font-weight:normal;">3600</div>
<div class="a" style="left:1264px;top:89px;width:1px;height:2px;background:#747474;"></div>
<div class="a" style="left:1270px;top:89px;width:1px;height:2px;background:#747474;"></div>
<div class="a" style="left:1276px;top:89px;width:1px;height:2px;background:#747474;"></div>
<div class="a" style="left:1282px;top:89px;width:1px;height:2px;background:#747474;"></div>
<div class="a" style="left:1288px;top:86px;width:1px;height:5px;background:#747474;"></div>
<div class="a" style="left:1295px;top:89px;width:1px;height:2px;background:#747474;"></div>
<div class="a" style="left:1301px;top:89px;width:1px;height:2px;background:#747474;"></div>
<div class="a" style="left:1307px;top:89px;width:1px;height:2px;background:#747474;"></div>
<div class="a" style="left:1313px;top:89px;width:1px;height:2px;background:#747474;"></div>
<div class="a" style="left:1319px;top:71px;width:1px;height:21px;background:#7c7c7c;"></div>
<div class="t" style="left:1322px;top:78px;font-size:12.5px;color:#d4d4d4;font-weight:normal;">3800</div>
<div class="a" style="left:1325px;top:89px;width:1px;height:2px;background:#747474;"></div>
<div class="a" style="left:1332px;top:89px;width:1px;height:2px;background:#747474;"></div>
<div class="a" style="left:1338px;top:89px;width:1px;height:2px;background:#747474;"></div>
<div class="a" style="left:1344px;top:89px;width:1px;height:2px;background:#747474;"></div>
<div class="a" style="left:1350px;top:86px;width:1px;height:5px;background:#747474;"></div>
<div class="a" style="left:1356px;top:89px;width:1px;height:2px;background:#747474;"></div>
<div class="a" style="left:1362px;top:89px;width:1px;height:2px;background:#747474;"></div>
<div class="a" style="left:1369px;top:89px;width:1px;height:2px;background:#747474;"></div>
<div class="a" style="left:1375px;top:89px;width:1px;height:2px;background:#747474;"></div>
<div class="a" style="left:1381px;top:71px;width:1px;height:21px;background:#7c7c7c;"></div>
<div class="t" style="left:1384px;top:78px;font-size:12.5px;color:#d4d4d4;font-weight:normal;">4000</div>
<div class="a" style="left:1387px;top:89px;width:1px;height:2px;background:#747474;"></div>
<div class="a" style="left:1393px;top:89px;width:1px;height:2px;background:#747474;"></div>
<div class="a" style="left:1400px;top:89px;width:1px;height:2px;background:#747474;"></div>
<div class="a" style="left:1406px;top:89px;width:1px;height:2px;background:#747474;"></div>
<div class="a" style="left:1412px;top:86px;width:1px;height:5px;background:#747474;"></div>
<div class="a" style="left:1418px;top:89px;width:1px;height:2px;background:#747474;"></div>
<div class="a" style="left:1424px;top:89px;width:1px;height:2px;background:#747474;"></div>
<div class="a" style="left:1430px;top:89px;width:1px;height:2px;background:#747474;"></div>
<div class="a" style="left:1437px;top:89px;width:1px;height:2px;background:#747474;"></div>
<div class="a" style="left:1443px;top:71px;width:1px;height:21px;background:#7c7c7c;"></div>
<div class="t" style="left:1446px;top:78px;font-size:12.5px;color:#d4d4d4;font-weight:normal;">4200</div>
<div class="a" style="left:1449px;top:89px;width:1px;height:2px;background:#747474;"></div>
<div class="a" style="left:1455px;top:89px;width:1px;height:2px;background:#747474;"></div>
<div class="a" style="left:1461px;top:89px;width:1px;height:2px;background:#747474;"></div>
<div class="a" style="left:1467px;top:89px;width:1px;height:2px;background:#747474;"></div>
<div class="a" style="left:1474px;top:86px;width:1px;height:5px;background:#747474;"></div>
<div class="a" style="left:1480px;top:89px;width:1px;height:2px;background:#747474;"></div>
<div class="a" style="left:1486px;top:89px;width:1px;height:2px;background:#747474;"></div>
<div class="a" style="left:1492px;top:89px;width:1px;height:2px;background:#747474;"></div>
<div class="a" style="left:1498px;top:89px;width:1px;height:2px;background:#747474;"></div>
<div class="a" style="left:1504px;top:71px;width:1px;height:21px;background:#7c7c7c;"></div>
<div class="t" style="left:1507px;top:78px;font-size:12.5px;color:#d4d4d4;font-weight:normal;">4400</div>
<div class="a" style="left:1511px;top:89px;width:1px;height:2px;background:#747474;"></div>
<div class="a" style="left:1517px;top:89px;width:1px;height:2px;background:#747474;"></div>
<div class="a" style="left:1523px;top:89px;width:1px;height:2px;background:#747474;"></div>
<div class="a" style="left:1529px;top:89px;width:1px;height:2px;background:#747474;"></div>
<div class="a" style="left:1535px;top:86px;width:1px;height:5px;background:#747474;"></div>
<div class="a" style="left:1541px;top:89px;width:1px;height:2px;background:#747474;"></div>
<div class="a" style="left:1548px;top:89px;width:1px;height:2px;background:#747474;"></div>
<div class="a" style="left:0px;top:90px;width:1556px;height:1px;background:#626262;"></div>
<div class="a" style="left:0px;top:91px;width:1556px;height:1px;background:#3c3c3c;"></div>
<div class="a" style="left:1003px;top:70px;width:1px;height:22px;background:#cfcfcf;"></div>
<svg class="a" style="left:988px;top:590px" width="32" height="32"><path d="M13.3 13.5 L25.1 25.6" stroke="#e8e8e8" stroke-width="6.5" stroke-linecap="round"/><path d="M13.3 13.5 L25.1 25.6" stroke="#000" stroke-width="4" stroke-linecap="round"/><path d="M12.8 12.8 L14.3 14.6" stroke="#fff" stroke-width="2" stroke-linecap="round"/><circle cx="8.2" cy="8.5" r="1.6" fill="#000"/><circle cx="15.3" cy="7.4" r="1.6" fill="#000"/><circle cx="6.6" cy="14.9" r="1.5" fill="#000"/></svg>
</body></html>
